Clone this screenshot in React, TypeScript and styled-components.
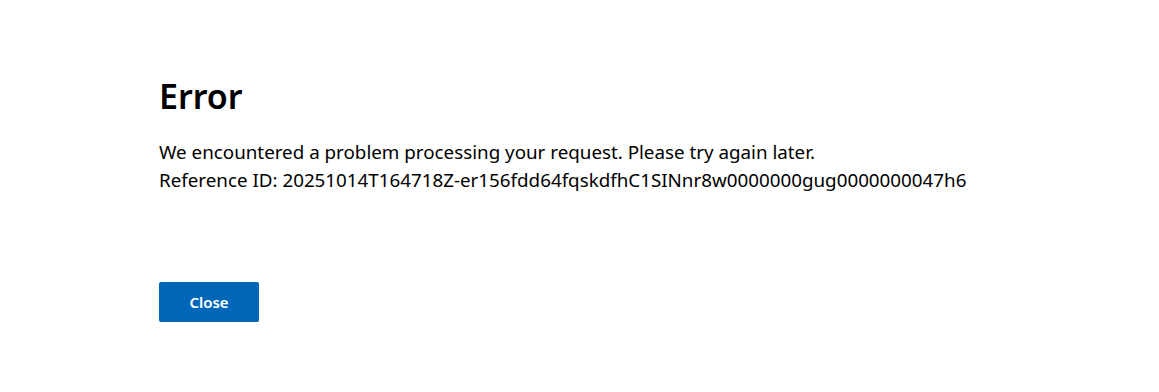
import styled, { createGlobalStyle } from "styled-components";

const GlobalStyle = createGlobalStyle`
    html, body {
        margin: 0;
        padding: 0;
        background: #ffffff;
    }
    body {
        font-family: "Noto Sans", "Open Sans", Arial, sans-serif;
        color: #000000;
    }
`;

const Page = styled.main`
    padding: 72px 159px 0;
`;

const Title = styled.h1`
    margin: 0 0 18px;
    font-size: 34px;
    font-weight: 600;
    line-height: 48px;
`;

const Message = styled.p`
    margin: 0;
    font-size: 18.8px;
    line-height: 28px;
`;

const Actions = styled.div`
    margin-top: 88px;
    display: flex;
`;

const Button = styled.button`
    width: 100px;
    height: 40px;
    border: none;
    border-radius: 2px;
    background: #0067b8;
    color: #ffffff;
    font-family: inherit;
    font-size: 15px;
    font-weight: 600;
    cursor: pointer;
    &:hover {
        opacity: 0.9;
    }
`;

export default function App() {
    return <>
        <GlobalStyle />
        <Page>
            <Title>Error</Title>
            <Message>
                We encountered a problem processing your request. Please try again later.
                <br />
                Reference ID: 20251014T164718Z-er156fdd64fqskdfhC1SINnr8w0000000gug0000000047h6
            </Message>
            <Actions>
                <Button type="button">Close</Button>
            </Actions>
        </Page>
    </>
}
